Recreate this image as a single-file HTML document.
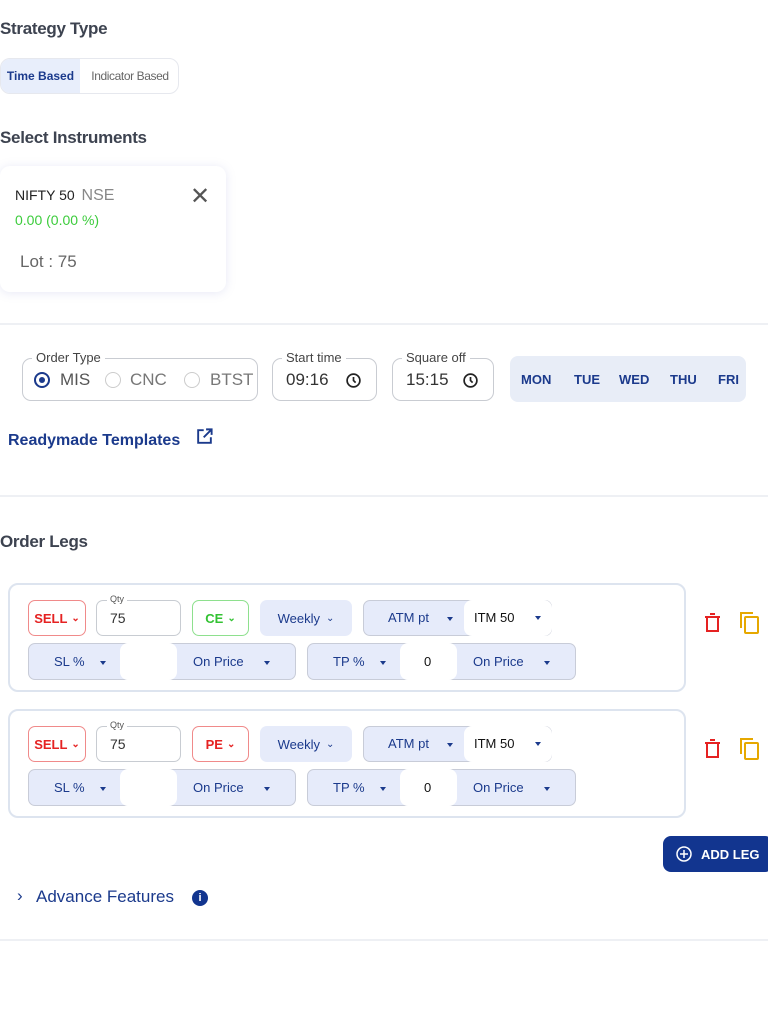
<!DOCTYPE html>
<html><head><meta charset="utf-8"><style>
*{box-sizing:border-box;margin:0;padding:0}
body{width:768px;height:1024px;background:#fff;font-family:"Liberation Sans",sans-serif;position:relative;overflow:hidden;color:#333}
.a{position:absolute}
.h{font-size:17px;font-weight:bold;color:#3d4350;letter-spacing:-0.3px}
.navy{color:#1b3a8c}
.div{position:absolute;left:0;width:768px;height:2px;background:#eef0f4}
.fs{position:absolute;border:1px solid #c9ccd2;border-radius:9px}
.lg{position:absolute;top:-9px;background:#fff;padding:0 4px;font-size:13px;color:#444}
.box{position:absolute;height:36px;border-radius:7px;display:flex;align-items:center;font-size:13px}
.pill{background:#e6ebfa;color:#1b3a8c}
.card{position:absolute;left:8px;width:678px;height:109px;border:2px solid #dde4ef;border-radius:10px}
.car{display:inline-block;width:0;height:0;border-left:3px solid transparent;border-right:3px solid transparent;border-top:4px solid #1b3a8c}
.w{background:#fff;position:absolute;top:0;height:36px;border-radius:8px}
</style></head><body>
<div class="a h" style="left:0;top:19px">Strategy Type</div>
<div class="a" style="left:0;top:58px;width:179px;height:36px;border:1px solid #e6e8ee;border-radius:10px;overflow:hidden;font-size:12px">
 <div class="a" style="left:0;top:0;width:79px;height:36px;background:#e8eefb;color:#1b3a8c;font-weight:bold;line-height:34px;text-align:center">Time Based</div>
 <div class="a" style="left:79px;top:0;width:100px;height:36px;color:#666;line-height:34px;text-align:center;letter-spacing:-0.4px">Indicator Based</div>
</div>
<div class="a h" style="left:0;top:128px">Select Instruments</div>
<div class="a" style="left:0;top:166px;width:226px;height:126px;border-radius:10px;box-shadow:0 1px 10px rgba(120,130,200,.18);background:#fff">
 <div class="a" style="left:15px;top:21px;font-size:14px;color:#222">NIFTY 50 <span style="color:#888;font-size:16px;margin-left:3px">NSE</span></div>
 <div class="a" style="left:190px;top:16px;font-size:24px;color:#555;font-weight:300">✕</div>
 <div class="a" style="left:15px;top:46px;font-size:14px;color:#3ccc3c">0.00 (0.00 %)</div>
 <div class="a" style="left:20px;top:86px;font-size:17px;color:#666">Lot : 75</div>
</div>
<div class="div" style="top:323px"></div>
<div class="fs" style="left:22px;top:358px;width:236px;height:43px">
 <div class="lg" style="left:9px">Order Type</div>
 <div class="a" style="left:11px;top:13px;width:16px;height:16px;border:2px solid #1b3a8c;border-radius:50%"><div style="margin:3px;width:6px;height:6px;background:#1b3a8c;border-radius:50%"></div></div>
 <div class="a" style="left:37px;top:11px;font-size:17px;color:#555">MIS</div>
 <div class="a" style="left:82px;top:13px;width:16px;height:16px;border:1.5px solid #ccc;border-radius:50%"></div>
 <div class="a" style="left:107px;top:11px;font-size:17px;color:#777">CNC</div>
 <div class="a" style="left:161px;top:13px;width:16px;height:16px;border:1.5px solid #ccc;border-radius:50%"></div>
 <div class="a" style="left:187px;top:11px;font-size:17px;color:#777">BTST</div>
</div>
<div class="fs" style="left:272px;top:358px;width:105px;height:43px">
 <div class="lg" style="left:9px">Start time</div>
 <div class="a" style="left:13px;top:11px;font-size:17px;color:#333">09:16</div>
 <svg class="a" style="left:72px;top:13px" width="17" height="17" viewBox="0 0 24 24" fill="none" stroke="#222" stroke-width="2.4"><circle cx="12" cy="12" r="9"/><path d="M12 7v5l3 3"/></svg>
</div>
<div class="fs" style="left:392px;top:358px;width:102px;height:43px">
 <div class="lg" style="left:9px">Square off</div>
 <div class="a" style="left:13px;top:11px;font-size:17px;color:#333">15:15</div>
 <svg class="a" style="left:69px;top:13px" width="17" height="17" viewBox="0 0 24 24" fill="none" stroke="#222" stroke-width="2.4"><circle cx="12" cy="12" r="9"/><path d="M12 7v5l3 3"/></svg>
</div>
<div class="a" style="left:510px;top:356px;width:236px;height:46px;background:#e8edf7;border-radius:8px;font-size:13px;font-weight:bold;color:#1b3a8c">
 <span class="a" style="left:11px;top:16px">MON</span>
 <span class="a" style="left:64px;top:16px">TUE</span>
 <span class="a" style="left:109px;top:16px">WED</span>
 <span class="a" style="left:160px;top:16px">THU</span>
 <span class="a" style="left:208px;top:16px">FRI</span>
</div>
<div class="a navy" style="left:8px;top:432px;font-size:16px;font-weight:bold">Readymade Templates</div>
<svg class="a" style="left:195px;top:427px" width="19" height="19" viewBox="0 0 24 24" fill="none" stroke="#1b3a8c" stroke-width="2.4"><path d="M11 4H4v16h16v-7"/><path d="M14 3h7v7M21 3l-10 10"/></svg>
<div class="div" style="top:495px"></div>
<div class="a h" style="left:0;top:532px">Order Legs</div>

<!-- leg template -->
<div id="legs"></div>
<script></script>

<div class="card" style="top:583px"></div>
<div class="card" style="top:709px"></div>

<!-- leg 1 -->
<div class="box" style="left:28px;top:600px;width:58px;border:1px solid #f08a8a;color:#e52222;font-weight:bold;justify-content:center">SELL <span style="font-size:10px;margin-left:4px">⌄</span></div>
<div class="box" style="left:96px;top:600px;width:85px;border:1px solid #c8ccd2;padding-left:13px;font-size:14px;color:#333">75<span class="a" style="left:10px;top:-7px;font-size:9px;background:#fff;padding:0 3px;color:#555">Qty</span></div>
<div class="box" style="left:192px;top:600px;width:57px;border:1px solid #8ee08e;color:#33c233;font-weight:bold;justify-content:center">CE <span style="font-size:10px;margin-left:4px">⌄</span></div>
<div class="box pill" style="left:260px;top:600px;width:92px;justify-content:center">Weekly <span style="margin-left:6px;font-size:10px">⌄</span></div>
<div class="box pill" style="left:363px;top:600px;width:189px;border:1px solid #c8ccd8">
 <span class="a" style="left:24px;top:9px">ATM pt</span><span class="car a" style="left:83px;top:16px"></span>
 <div class="w" style="left:100px;width:88px;top:-1px"><span class="a" style="left:10px;top:10px;color:#111">ITM 50</span><span class="car a" style="left:71px;top:16px"></span></div>
</div>
<div class="box pill" style="left:28px;top:643px;width:268px;height:37px;border:1px solid #c8ccd8">
 <span class="a" style="left:25px;top:10px">SL %</span><span class="car a" style="left:71px;top:17px"></span>
 <div class="w" style="left:91px;width:57px;top:-1px;height:37px"></div>
 <span class="a" style="left:164px;top:10px">On Price</span><span class="car a" style="left:235px;top:17px"></span>
</div>
<div class="box pill" style="left:307px;top:643px;width:269px;height:37px;border:1px solid #c8ccd8">
 <span class="a" style="left:25px;top:10px">TP %</span><span class="car a" style="left:72px;top:17px"></span>
 <div class="w" style="left:92px;width:57px;top:-1px;height:37px"><span class="a" style="left:24px;top:11px;color:#111">0</span></div>
 <span class="a" style="left:165px;top:10px">On Price</span><span class="car a" style="left:236px;top:17px"></span>
</div>

<!-- leg 2 -->
<div class="box" style="left:28px;top:726px;width:58px;border:1px solid #f08a8a;color:#e52222;font-weight:bold;justify-content:center">SELL <span style="font-size:10px;margin-left:4px">⌄</span></div>
<div class="box" style="left:96px;top:726px;width:85px;border:1px solid #c8ccd2;padding-left:13px;font-size:14px;color:#333">75<span class="a" style="left:10px;top:-7px;font-size:9px;background:#fff;padding:0 3px;color:#555">Qty</span></div>
<div class="box" style="left:192px;top:726px;width:57px;border:1px solid #f08a8a;color:#e52222;font-weight:bold;justify-content:center">PE <span style="font-size:10px;margin-left:4px">⌄</span></div>
<div class="box pill" style="left:260px;top:726px;width:92px;justify-content:center">Weekly <span style="margin-left:6px;font-size:10px">⌄</span></div>
<div class="box pill" style="left:363px;top:726px;width:189px;border:1px solid #c8ccd8">
 <span class="a" style="left:24px;top:9px">ATM pt</span><span class="car a" style="left:83px;top:16px"></span>
 <div class="w" style="left:100px;width:88px;top:-1px"><span class="a" style="left:10px;top:10px;color:#111">ITM 50</span><span class="car a" style="left:71px;top:16px"></span></div>
</div>
<div class="box pill" style="left:28px;top:769px;width:268px;height:37px;border:1px solid #c8ccd8">
 <span class="a" style="left:25px;top:10px">SL %</span><span class="car a" style="left:71px;top:17px"></span>
 <div class="w" style="left:91px;width:57px;top:-1px;height:37px"></div>
 <span class="a" style="left:164px;top:10px">On Price</span><span class="car a" style="left:235px;top:17px"></span>
</div>
<div class="box pill" style="left:307px;top:769px;width:269px;height:37px;border:1px solid #c8ccd8">
 <span class="a" style="left:25px;top:10px">TP %</span><span class="car a" style="left:72px;top:17px"></span>
 <div class="w" style="left:92px;width:57px;top:-1px;height:37px"><span class="a" style="left:24px;top:11px;color:#111">0</span></div>
 <span class="a" style="left:165px;top:10px">On Price</span><span class="car a" style="left:236px;top:17px"></span>
</div>

<!-- icons -->
<svg class="a" style="left:704px;top:613px" width="17" height="20" viewBox="0 0 17 20" fill="none" stroke="#e52222" stroke-width="2"><path d="M1 4h15M6 1h5M3 4v14h11V4"/></svg>
<svg class="a" style="left:739px;top:611px" width="22" height="24" viewBox="0 0 22 24" fill="none" stroke="#e6a800" stroke-width="2"><path d="M2 17V2h12"/><rect x="6" y="6" width="13" height="16" rx="1"/></svg>
<svg class="a" style="left:704px;top:739px" width="17" height="20" viewBox="0 0 17 20" fill="none" stroke="#e52222" stroke-width="2"><path d="M1 4h15M6 1h5M3 4v14h11V4"/></svg>
<svg class="a" style="left:739px;top:737px" width="22" height="24" viewBox="0 0 22 24" fill="none" stroke="#e6a800" stroke-width="2"><path d="M2 17V2h12"/><rect x="6" y="6" width="13" height="16" rx="1"/></svg>

<div class="a" style="left:663px;top:836px;width:110px;height:36px;background:#12358f;border-radius:8px;color:#fff;font-size:13px;font-weight:bold">
 <svg class="a" style="left:13px;top:10px" width="16" height="16" viewBox="0 0 16 16" fill="none" stroke="#fff" stroke-width="1.5"><circle cx="8" cy="8" r="7"/><path d="M8 4v8M4 8h8"/></svg>
 <span class="a" style="left:38px;top:11px">ADD LEG</span>
</div>
<div class="a navy" style="left:17px;top:886px;font-size:17px">›</div>
<div class="a navy" style="left:36px;top:887px;font-size:17px">Advance Features</div>
<div class="a" style="left:192px;top:890px;width:16px;height:16px;border-radius:50%;background:#12358f;color:#fff;font-size:11px;font-weight:bold;text-align:center;line-height:16px">i</div>
<div class="div" style="top:939px"></div>
</body></html>
